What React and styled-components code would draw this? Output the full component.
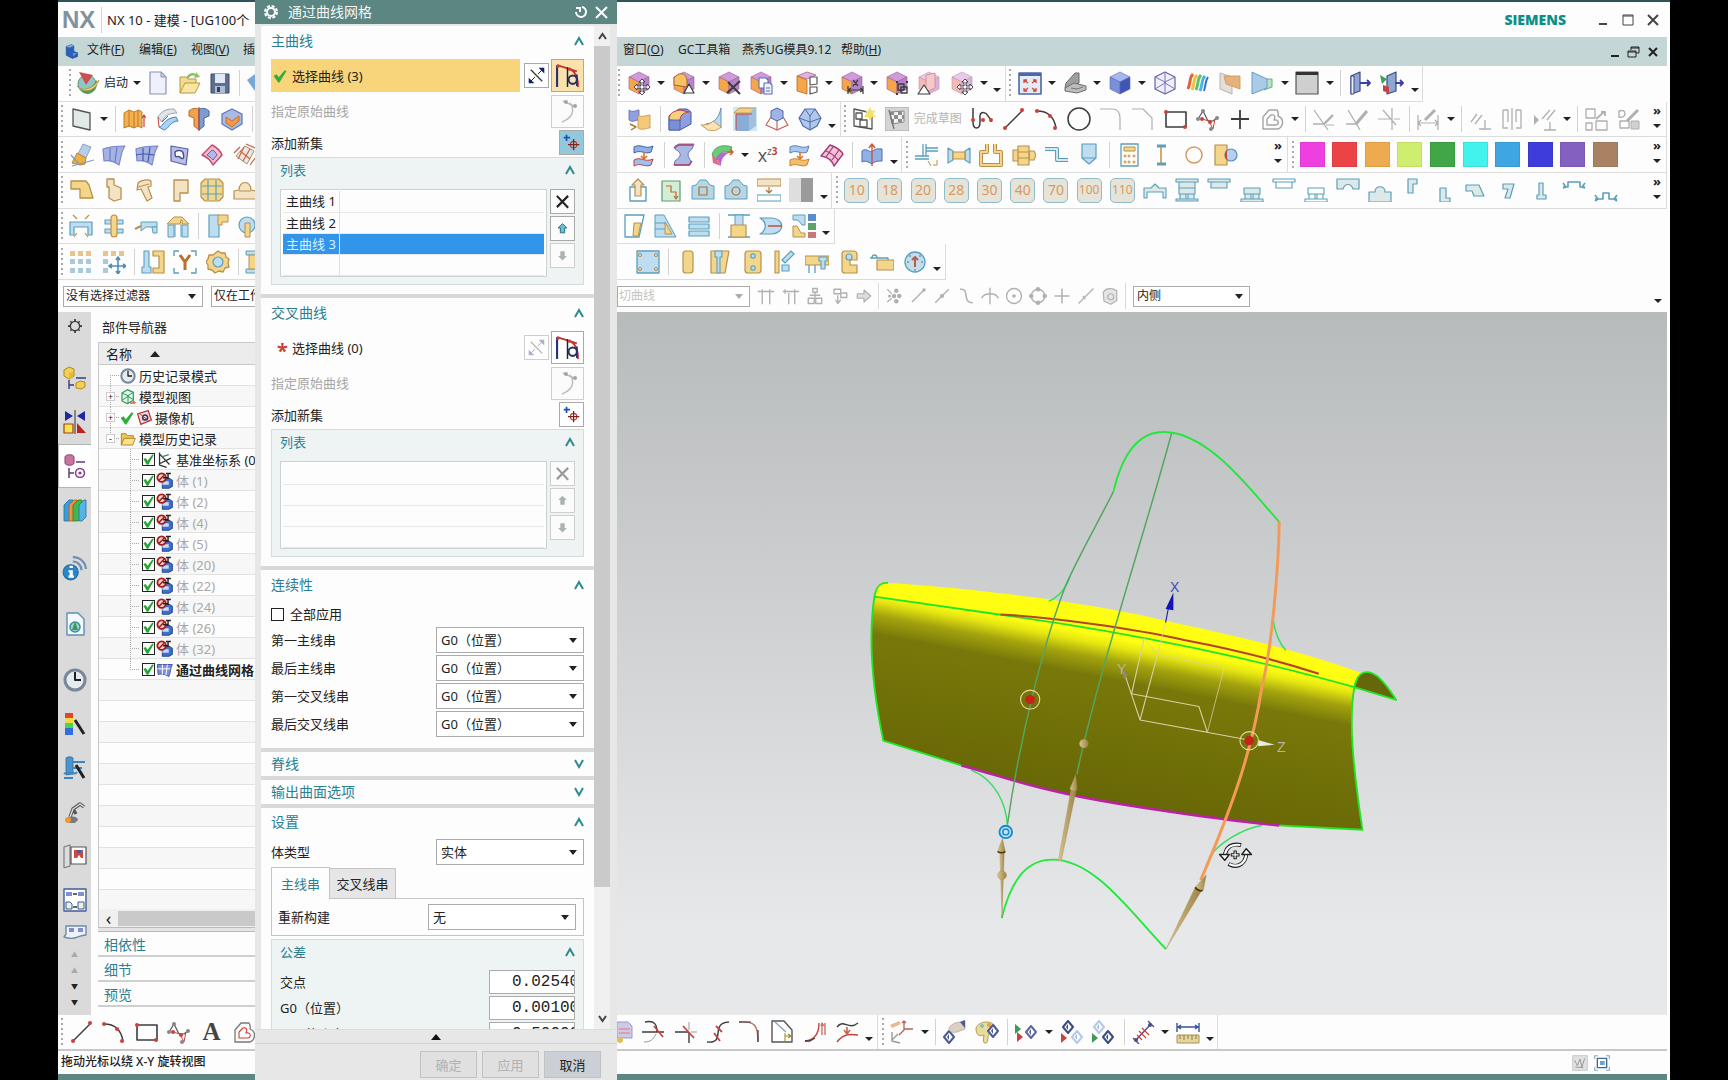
import React, { useState } from "react";
import styled, { createGlobalStyle, css } from "styled-components";

const GlobalStyle = createGlobalStyle`
  * {
    box-sizing: border-box;
  }
  body {
    margin: 0;
    background: #000;
    color: #222;
    font: 13px/16px "Noto Sans", "Noto Sans CJK SC", sans-serif;
  }
  button, input, select {
    font: inherit;
    color: inherit;
    margin: 0;
    padding: 0;
  }
`;

/* ---------- icon drawings: [path, fill, stroke, stroke width] ---------- */
const TAN = "#f4d68a";
const TANL = "#b8904c";
const CREAM = "#f3e2c4";
const BLUE = "#bfddf0";
const BLUEL = "#5a9fbd";
const RED = "#c8433c";
const GREY = "#b0b0b0";
const DARK = "#3c3c3c";
const VIO = "#7d86c9";
const PALE = "#dde9e6";

const line = (d, stroke = DARK, w = 1.4) => [d, "none", stroke, w];
const dot = (x, y, r = 2, fill = RED) => [
  `M${x - r} ${y}a${r} ${r} 0 1 0 ${2 * r} 0a${r} ${r} 0 1 0 ${-2 * r} 0z`,
  fill,
];
const ring = (x, y, r, stroke, w = 1.4, fill = "none") => [
  `M${x - r} ${y}a${r} ${r} 0 1 0 ${2 * r} 0a${r} ${r} 0 1 0 ${-2 * r} 0z`,
  fill,
  stroke,
  w,
];
const cube = (top, left, right, edge) => [
  ["M2 6 12 1l10 5-10 5z", top, edge, 0.6],
  ["M2 6l10 5v12L2 18z", left, edge, 0.6],
  ["M22 6l-10 5v12l10-5z", right, edge, 0.6],
];
const syncCube = cube("#cf9bdc", "#f5a54a", "#b583cc", "#9a5c8c");
const paleCube = cube("#e6cbea", "#f3b9b4", "#d9b3dc", "#c28fb4");
const blueCube = cube("#a9b8ea", "#7b8fd8", "#3f56b4", "#5a6cc0");
const gem = (x, y, c, e) => [
  [`M${x} ${y - 6}l5 6-5 6-5-6z`, "#fff", e, 2],
  [`M${x} ${y - 3}v6l-2-3z`, c],
];
const moveArrows = [
  ["M15 8l3 3h-2v4h4v-2l3 3-3 3v-2h-4v4h2l-3 3-3-3h2v-4h-4v2l-3-3 3-3v2h4v-4h-2z", "#fff", DARK, 0.9],
];

const icons = {
  launch: [
    ring(11, 13, 9, "#5b9a6a", 1, "#8fc7c9"),
    ["M4 17c5 3 12 0 17-8 1 8-3 13-9 14-4 0-7-3-8-6z", "#4f9a62"],
    ["M1 15c6 6 15 3 22-6-3 10-14 15-22 6z", "#f0d36a", "#b9912f", 0.7],
    ["M3 1l14 3-7 10z", "#cc4f50"],
  ],
  newDoc: [["M4 1h11l5 5v17H4z", "#eef0fb", "#8d92b8", 1.2], ["M15 1v5h5z", "#c6cae6", "#8d92b8", 1]],
  open: [
    ["M3 22V6h6l2 2h8v4", "#f3dc8d", "#b79a43", 1],
    ["M3 22l5-10h15l-5 10z", "#f7e6a4", "#b79a43", 1],
    ["M9 7c2-5 7-6 10-4V1l4 5-6 1 1-2c-3-1-5 0-6 2z", "#8cc45b"],
  ],
  save: [["M3 3h18v19H3z", "#5c6e92", "#3b4a6b", 1], ["M7 3h10v9H7z", "#e3e9f4"], ["M7 15h10v7H7z", "#aebbd4"], ["M9 16h3v5H9z", "#33415f"]],
  undoCut: [["M2 9l8-6v4h12v9H10v4z", "#79a7d9"]],
  plane: [["M3 2l17 4v17L3 19z", "#e2e9e6", "#555", 1.3]],
  extrude: [["M2 6l5-3 5 2 5-2 3 2v16l-4-2-4 2-5-2-5 2z", "#f4b04f", "#c07a26", 1], line("M7 3v17M12 5v16M16 3v16", "#c07a26", 1), line("M22 20V9M20 11l2-3 2 3", RED, 1.2)],
  sweep: [["M3 10C8 2 14 2 19 2l3 4C14 6 9 9 7 15z", "#dfe6ea", "#9aa6ae", 1], ["M4 20c4 0 5-9 17-10l2 4c-8 0-10 9-14 9z", "#a9d2f3", "#4f7fb5", 1], line("M3 10l1 10M7 15l6-6", RED, 1)],
  revolve: [["M2 4c3-3 7-3 10-2v21l-5-4V11L2 9z", "#f2a24a", "#b56b20", 1], ["M22 4c-3-3-7-3-10-2v21l5-4V11l5-2z", "#7d9cd0", "#42639c", 1], line("M12 0v24", RED, 1)],
  shellBox: [["M12 2l10 5v10l-10 6L2 17V7z", "#a8bbe4", "#5b74b5", 1.2], ["M6 10l6 4 7-5v5l-7 6-6-4z", "#f29a48", "#cf6c22", 1]],
  brush: [["M13 1l8 3-5 11-8-4z", "#b6cfe8", "#7797b9", 0.8], ["M7 10l9 5-1 6-5 1-8-2z", "#eeb040", "#c1842a", 1], line("M1 12l8 9M2 23l22-6", "#7c9bc4", 1.2)],
  ruled: [["M1 6c7-3 14-3 22-3-4 5-4 12-6 19-6-4-10-5-15-4z", "#a4b2e4", VIO, 1.2], line("M8 5v13M15 4l-2 15", "#6370b8", 1)],
  mesh: [["M1 6c7-3 14-3 22-3-4 5-4 12-6 19-6-4-10-5-15-4z", "#a4b2e4", VIO, 1.2], line("M8 5v13M15 4l-2 15M1 12c7-2 12-1 18 0", "#4d5aa8", 1.2)],
  nSided: [["M4 3l17 3-2 16-15-4z", "#b9bfe8", "#565ea6", 1.2], ["M8 9c3-3 8-1 8 1 2 6-1 7-3 4-3-2-5 3-5-5z", "#fff", "#444b8a", 1.4]],
  patch: [["M2 12L12 2c4 2 8 5 10 10l-9 10c-2-4-6-8-11-10z", "#f5bccb", "#c2476c", 1.4], ["M7 12l5-5c3 1 4 3 5 5l-4 5c-2-2-4-4-6-5z", "#b5b9e8", "#5a61ae", 1]],
  gridWarp: [["M4 13L13 3l9 5-7 13z", "#ece7e3", "#a08e83", 1], line("M8 8l10 8M12 4l-6 12M18 6l-7 12M2 10l6-6M18 22l6-8M14 1l9 4", "#c9653e", 1.2)],
  blockA: [["M1 3h15l3 4 4 13H10v-9H1z", TAN, TANL, 1.3]],
  blockB: [["M5 1h7v6l7 3v11l-7 2-5-3V9H5z", CREAM, TANL, 1.3]],
  screw: [["M3 5c3-3 10-4 13-2v5l-3 1 4 11-5 3-6-12-4 1z", CREAM, TANL, 1.2], line("M3 9l11-3", TANL, 1)],
  blockC: [["M6 2h14v13h-8v8H6z", CREAM, TANL, 1.3]],
  netTan: [["M5 1h14l4 4v14l-4 4H5l-4-4V5z", TAN, TANL, 1.2], line("M8 2v20M16 2v20M2 8h20M2 16h20", BLUEL, 1.2)],
  bell: [["M1 21v-8l5-1c0-10 12-10 12 0l5 1v8z", CREAM, TANL, 1.2], line("M6 13h12", TANL, 1)],
  spanIn: [["M1 8h22v13h-4v-8H5v8H1z", BLUE, BLUEL, 1.2], line("M4 1l4 4M20 1l-4 4M5 23l3-4M19 23l-3-4", TANL, 1.2)],
  crossPill: [["M3 6h18v4H3zM3 15h18v4H3z", BLUE, BLUEL, 1.1], ["M9 4a3 3 0 0 1 6 0v16a3 3 0 0 1-6 0z", TAN, TANL, 1.2]],
  hammer: [["M7 8h16v5H12l-5 4z", BLUE, BLUEL, 1], ["M18 13h5v6h-4z", BLUE, BLUEL, 1], line("M1 15l6-3", TANL, 2)],
  archTan: [["M2 11h6v12H2zM16 11h6v12h-6z", BLUE, BLUEL, 1], ["M1 10l7-7h8l7 7h-7V6h-1l-1 4h-5z", TAN, TANL, 1], line("M9 23V10M15 23V10", BLUEL, 1)],
  cornerTan: [["M3 1h10v22H3z", BLUE, BLUEL, 1.2], ["M12 1h10v7h-6v3h-4z", TAN, TANL, 1]],
  roundBar: [ring(9, 11, 8, BLUEL, 1.2, BLUE), ["M7 9h5v14H7z", TAN, TANL, 1]],
  dots: [["M1 1h5v5H1zM9 1h5v5H9zM17 1h5v5h-5z", "#eac28c"], ["M1 9h5v5H1zM9 9h5v5H9zM17 9h5v5h-5zM1 18h5v5H1zM9 18h5v5H9zM17 18h5v5h-5z", "#aac9dc"]],
  dotsMove: [["M1 1h5v5H1zM9 1h5v5H9zM17 1h5v5h-5z", "#eac28c"], ["M1 9h5v5H1zM1 18h5v5H1z", "#aac9dc"], line("M16 8v15M8 16h15M14 10l2-3 2 3M14 21l2 3 2-3M10 14l-3 2 3 2M21 14l3 2-3 2", "#4f8fba", 1.6)],
  bracket: [["M3 1h5v16h2v6H1v-6h2z", BLUE, BLUEL, 1.1], ["M12 1h11v22H12v-5h6V6h-6z", TAN, TANL, 1.2]],
  yFrame: [line("M1 6V1h5M18 1h5v5M1 18v5h5M18 23h5v-5", BLUEL, 1.4), line("M7 5l5 7v8M17 5l-5 7", "#b5702d", 3)],
  gearTan: [["M12 1l3 2 4 0 1 4 3 2-1 4 1 4-4 1-2 4-4-1-4 2-3-3-4-1 0-4-2-3 2-3 1-4 4 0z", TAN, TANL, 1.3], ring(12, 12, 5, BLUEL, 1.2, BLUE)],
  beam: [["M1 1h14v4H1zM1 19h14v4H1z", BLUE, BLUEL, 1], ["M4 5h8v14H4z", TAN, TANL, 1]],

  cubeMove: [...syncCube, ...moveArrows],
  cubeFace: [...syncCube, ["M2 7c4-6 12-6 13 2v7L2 14z", "#f7c263", "#a8622a", 1], ["M17 13l5 9H12z", "#fff", DARK, 1.2]],
  cubeDelete: [...syncCube, line("M11 11l12 12M23 10L10 22", DARK, 2)],
  cubeCopy: [...syncCube, ["M10 7h7l2 2v8h-9z", "#fff", "#5b6db5", 1.1], ["M15 12h6l2 2v9h-8z", "#eef2ff", "#5b6db5", 1.1], line("M17 17h4M17 20h4", "#5b6db5", 1)],
  cubePattern: [["M2 5l10-4 9 3-9 4z", "#e5b0dc", "#a8628c", 0.8], ["M2 5l10 4v14L2 20z", "#f5a54a", "#b56b20", 0.8], ["M15 6h7v7l-7 1zM15 16h7v5l-7 2z", "#fff", "#555", 1.2]],
  cubeDim: [...syncCube, line("M8 15v8M23 15v8M8 19h15M11 17l-3 2 3 2M20 17l3 2-3 2M13 9l5 6M18 9l-5 6", DARK, 1.2)],
  cubeGroup: [...syncCube, ["M13 13h6v6h-6z", "none", DARK, 1.4], ["M16 16h6v6h-6z", "none", DARK, 1.4], line("M11 11h2M21 11h2M11 23h2", DARK, 2)],
  cubePairTri: [...paleCube, ["M9 4l9-2v15l-9 4z", "#f5c9c9", "#c78490", 0.8], ["M7 14l6 9H1z", "#fff", DARK, 1.1]],
  cubePaleMove: [...paleCube, ...moveArrows],
  fitView: [["M1 2h22v21H1z", "#e4eaf6", "#4f67a4", 1.6], ["M1 2h22v3H1z", "#4f67a4"], line("M6 9l4 3M18 9l-4 3M6 20l4-3M18 20l-4-3M6 12V9h3M18 12V9h-3M6 17v3h3M18 17v3h-3", "#cd4a32", 1.3)],
  hinge: [["M3 12L12 2h4v10l-5 4-9 1z", "#9e9e9e", "#6d6d6d", 1], ["M2 17l9-5 12 3v4l-9 3-12-2z", "#bdbdbd", "#6d6d6d", 1], line("M8 17l6 1 6-2", "#777", 1)],
  solidCube: blueCube,
  wireCube: [["M2 6l10-5 10 5v12l-10 5-10-5z", "#efeffa", "#6660a8", 1.2], line("M2 6l10 5 10-5M12 11v12M12 1v11M2 18l10-6 10 6", "#7a74b6", 1)],
  rainbow: [line("M3 18c3-7 1-11 5-15", "#e1623c", 3), line("M7 19c3-7 1-11 5-15", "#f0c33c", 3), line("M11 19c3-7 1-11 5-15", "#61c06a", 3), line("M15 20c3-7 1-11 5-15", "#41b9e0", 3), line("M19 20c2-6 1-10 4-14", "#3d6bd0", 2)],
  clipPlane: [["M2 2l12 4v17L2 18z", "#e3e0dc", "#b9b4ae", 1], ["M6 5h16v13l-14-5z", "#e5b27c", "#cc9257", 0.8]],
  clipBlue: [["M12 8h10v8l-8 3z", "#b6e4c0", "#69ae7d", 1], ["M2 1l15 7v9L2 23z", "#aacbe6", "#6f9ac2", 1]],
  shade: [["M1 1h22v22H1z", "#cfcfcf", "#555", 1.2], ["M1 1h22v3H1z", "#333"]],
  doorOut: [["M3 5l9-4v19l-9 3z", "#8fa6d2", "#3a4b86", 1.2], ["M3 5h3v18H3z", "#e7ecf8", "#3a4b86", 1], line("M12 12h10M19 9l3 3-3 3", "#3b3fa8", 1.8)],
  doorMark: [["M7 5l9-4v19l-9 3z", "#8fa6d2", "#3a4b86", 1.2], line("M15 12h8M20 9l3 3-3 3", "#3b3fa8", 1.8), ["M0 4l7 4-5 5z", "#3ea05a"], ["M3 20v-6l6 2v6z", RED]],

  bend: [["M1 3c4 3 7 0 10 0v10c-4 0-6 3-10 0z", "#8f9fdf", "#5b69b3", 0.8], ["M10 8c4 3 8 0 12 0v13c-5 0-7 3-12 0z", "#f5c87c", "#c3924a", 0.8], line("M2 17l6 3-5 3", "#b7722a", 1.4)],
  edgeBlend: [["M1 9l10-7h8l4 3v12l-11 6H1z", "#8d9fe0", "#4658a8", 1], ["M1 13c0-8 6-9 11-10l9 2c-7 1-9 4-9 9z", "#f6d07c", "#b5423a", 1], ["M1 13h11v10H1z", "#7c8ed6", "#4658a8", 0.8]],
  sheetUp: [["M21 1v20l-7-4H6c9-1 13-7 15-16z", "#bcd9f1", "#6c8fb5", 1], ["M1 18c6 0 9-1 12-4l8 6c-4 4-9 4-13 3z", "#fbe2b4", "#c69a55", 1]],
  chamfer: [["M0 0h24v24H0z", "#cfe9f1"], ["M1 6l5-5h17l-4 5z", "#f2cf85", "#b08a4a", 0.8], ["M3 7h13v17H3z", "#88add6"], ["M16 7l5-6h2v18l-7 5z", "#a3bfe0"], line("M3 7v16M3 7h16", RED, 1)],
  offsetCube: [["M12 1l6 3v7l-6 3-6-3V4z", "#9fb4e6", "#4e64a8", 1], line("M6 10L1 18l11 5 11-5-5-8M12 14v9", "#c05a52", 1.1)],
  ball: [["M7 2h10l6 9-4 8-7 4-7-4-4-8z", "#b1c8ea", "#4e6db2", 1.2], line("M7 2l5 7 5-7M12 9v14M1 11l11 4 11-4", "#4e6db2", 1)],
  sketchNew: [["M2 2l18 4v16L2 19z", "#fff", "#555", 1.3], line("M4 6h6v6H4zM8 13h7v7H8z", "#555", 1.3), ["M18 0l2 4 4-1-3 4 3 3-4 0-2 4-2-4-4 0 3-4-2-3 3 1z", "#f2e26c"]],
  flag: [["M0 0h24v24H0z", "#d4d4d4", "#a9a9a9", 1], ["M5 5l14-1v11L7 17z", "#f3f3f3", "#888", 1], ["M5 5h4v3H5zM13 4h4v4h-4zM9 8h4v4H9zM17 8h2v4h-2zM6 12h3v4H6zM13 12h4v3h-4z", "#8d8d8d"], line("M4 3l5 19", "#777", 1.4)],
  profile: [line("M3 1v14c0 8 7 8 7 0V9c0-5 6-4 8 0 3 3 3 4 3 6", DARK, 1.5), dot(3, 13), dot(13, 13), dot(21, 13)],
  line: [line("M3 21L21 3"), dot(3, 21), dot(20, 3)],
  arc: [line("M2 4c10 0 17 5 19 17"), dot(2, 4), dot(15, 9), dot(20, 21)],
  circle: [ring(12, 12, 11, DARK, 1.5)],
  fillet: [line("M1 2h12c6 0 8 3 8 9v12", GREY, 1.2)],
  chamferLine: [line("M1 2h11l9 9v12", GREY, 1.2)],
  rect: [["M2 5h20v15H2z", "none", DARK, 1.6], dot(2, 5), dot(21, 20)],
  spline: [line("M2 12l5-8 5 10 5 0 5-4", "#555", 1.2), line("M6 12l7 2 4 8 2-10", RED, 1), dot(2, 12, 2, "#888"), dot(7, 4, 2, "#888"), dot(6, 12), dot(14, 15), dot(21, 11, 2, "#888"), dot(15, 22, 2, "#888")],
  plus: [line("M12 3v19M3 12h18", DARK, 1.8)],
  offsetCurve: [line("M3 22V10l6-7h8c2 3 1 5 1 6 7 3 5 11 0 13z", "#a5a5a5", 1.4), line("M7 18v-6l4-4c5-1 4 3 3 5 6-1 5 5 1 5z", "#a5a5a5", 1.4)],
  offsetRed: [line("M3 22V10l6-7h8c2 3 1 5 1 6 7 3 5 11 0 13z", "#777", 1.3), line("M7 18v-6l4-4c5-1 4 3 3 5 6-1 5 5 1 5z", RED, 1.1)],
  trimA: [line("M2 3l14 20M1 17h12", GREY, 1.3), line("M12 17l9-9", GREY, 2.4), line("M14 18h8", GREY, 1)],
  trimB: [line("M3 3l12 20M1 17h10", GREY, 1.3), line("M11 17L22 4", GREY, 3)],
  trimC: [line("M1 12h14M15 1v22M6 3l13 15", GREY, 1.2), line("M17 12h6", GREY, 1)],
  dimGrey: [line("M2 8v15M22 8v15M2 16h20M5 13l-3 3 3 3M19 13l3 3-3 3", GREY, 1.2), line("M9 13L19 3", GREY, 3)],
  perp: [line("M3 15L9 7M7 17l7-9M11 22h12M17 13v9", GREY, 1.3)],
  mirrorGrey: [line("M3 3v18h5M21 3v18h-5M12 1v22M8 3v12M16 3v12M3 3h5M16 3h5", GREY, 1.3)],
  triPerp: [["M1 8l5 5-5 5z", GREY], line("M9 12l8-9M14 13l8-10M11 23h12M17 15v8", GREY, 1.3)],
  refA: [["M2 2h9v9H2zM2 16h6v7H2zM12 14h11v9H12z", "none", GREY, 1.3], line("M12 12l8-7M17 5h4v4", GREY, 1.8)],
  refB: [["M2 4c8-3 8 8 0 6zM3 14h9v7H3z", "none", GREY, 1.4], line("M10 14L21 3", GREY, 3), ["M14 14h8v8h-8z", "#d0d0d0", GREY, 1]],

  warpPair: [["M2 4c7-4 11 3 19-1l-2 6c-6 3-10-3-17 1z", "#8cb0e8", "#3f62a8", 1], ["M2 17c7-4 11 3 19-1l-2 6c-6 3-10-3-17 1z", "#9fc0ee", "#b8423a", 1], line("M12 9v7M9 13l3 3 3-3", "#d9762b", 1.6)],
  bridge: [["M3 3l4-2h15l-2 5c-6 4-4 8-1 12l-1 4H2l1-4c7-5 7-8 0-12z", "#a8b9e4", "#6a76b8", 1], line("M2 5l5-3h14M2 22h15l3-4", "#b53c64", 1.4)],
  offsetSrf: [["M1 12C3 3 12 1 21 4l-2 6c-6-3-12 0-13 7z", "#6fcb7a", "#3f9a58", 0.8], ["M5 15c3-5 8-7 13-5-5 2-8 6-8 13z", "#b866d0"], ["M1 12l5 5 4 6-8-3z", "#e56a7c"], line("M16 9h6M19 6l3 3-3 3", "#c4692a", 1.6)],
  warpTan: [["M2 4c7-4 11 3 19-1l-2 6c-6 3-10-3-17 1z", "#a9c8f0", "#5b7db8", 1], ["M2 17c7-4 11 3 19-1l-2 6c-6 3-10-3-17 1z", "#f3bf6c", "#c8842f", 1], line("M12 9v7M9 13l3 3 3-3", "#d9762b", 1.6)],
  netPink: [["M1 13L10 2c6 2 10 4 13 9l-9 12C12 17 8 14 1 13z", "#f4c3d8", "#a63a78", 1.4], line("M6 8c5 2 9 5 12 9M13 4l-7 10M19 7l-7 10", "#a63a78", 1.2)],
  flow: [["M2 8c5-4 8 3 11 0s6-2 9-2v12c-4 0-6 0-9 2s-6-4-11-1z", "#8fb1e6", "#4a6db0", 1], line("M12 23V2M9 5l3-4 3 4", "#c9553f", 1.4)],
  tee: [line("M1 13h14M1 16h14M9 1v12M12 1v12M12 5h12M12 8h12", BLUEL, 1.3), line("M14 18l3 5M23 17v5h-4", TANL, 1)],
  dumbbell: [["M1 5l5 3v9l-5 3zM23 5l-5 3v9l5 3z", BLUE, BLUEL, 1.2], ["M6 9h12v7H6z", TAN, TANL, 1.2]],
  pot: [line("M8 1v8H2v13h20V9h-6V1", TANL, 4), line("M8 1v8H2v13h20V9h-6V1", TAN, 2)],
  nuts: [["M1 7h6v11H1zM17 8h5l2 4-2 5h-5z", TAN, TANL, 1.1], ["M6 3h11v19H6z", TAN, TANL, 1.2], line("M6 9h11M6 15h11", TANL, 1)],
  zPipe: [line("M1 6h12v11h11", BLUEL, 4), line("M1 6h12v11h11", "#fff", 1.4)],
  pencilTip: [["M5 1h14v14l-7 6-7-6z", BLUE, BLUEL, 1.2], line("M5 15h14", BLUEL, 1)],
  calc: [["M4 1h17v22H4z", "#fffaf0", BLUEL, 1.3], ["M7 4h11v4H7z", TAN, TANL, 1], ring(8, 13, 1, TANL, 1), ring(12, 13, 1, TANL, 1), ring(17, 13, 1, TANL, 1), ring(8, 19, 1, TANL, 1), ring(12, 19, 1, TANL, 1), ring(17, 19, 1, TANL, 1)],
  iBeam: [line("M8 3h9M8 21h9", BLUEL, 3), line("M12 4v16", "#c98c3a", 1.5)],
  orangeRing: [ring(12, 12, 8, "#d49a62", 1.5)],
  plateBall: [["M1 2h12v20H1z", TAN, TANL, 1.2], ring(17, 12, 6, "#5a8fc0", 1.2, "#b5d0ee"), ["M13 7c-3 3-3 7 0 10z", RED]],

  boxUp: [["M4 9h16v14H4z", "#fff", BLUEL, 1.4], ["M9 18V7H6l6-6 6 6h-3v11z", CREAM, TANL, 1.2]],
  boxPath: [["M3 3h18v20H3z", "#d5ecd6", "#5aa074", 1.2], line("M7 8h5v6h5v6M15 18l2 3 2-3", "#b5702d", 1.2)],
  camSq: [["M1 8l4-1 4-5h6l4 5 4 1v13H1z", "#b5d6e6", BLUEL, 1], ["M8 9h8v8H8z", "none", "#b5702d", 1.2]],
  camRd: [["M1 8l4-1 4-5h6l4 5 4 1v13H1z", "#b5d6e6", BLUEL, 1], ring(12, 13, 4, "#b5702d", 1.2)],
  press: [["M0 1h24v7H0z", CREAM, TANL, 1.1], ["M0 17h24v6H0z", "#fff", BLUEL, 1.2], line("M12 9v6M9 12l3 3 3-3", "#b5702d", 1.1)],
  halfGrey: [["M0 0h12v24H0z", "#dedede"], ["M12 0h12v24H12z", "#9b9b9b"]],

  roofA: [["M1 20v-10h7l4-4 4 4h7v10h-3v-6H4v6z", PALE, BLUEL, 1.1]],
  stackA: [["M1 1h22v3H1zM4 4h16v12H4zM5 16h6v5H5zM13 16h6v5h-6zM1 21h22v2H1z", PALE, BLUEL, 1.1], line("M4 10h16", BLUEL, 1)],
  stackB: [["M1 1h22v3H1zM4 4h16v6H4z", PALE, BLUEL, 1.1]],
  stackC: [["M4 10h16v6H4zM5 16h6v5H5zM13 16h6v5h-6zM1 21h22v3H1z", PALE, BLUEL, 1.1]],
  stackD: [["M1 1h22v3H1zM4 4h16v6H4z", "#fff", BLUEL, 1.1]],
  stackE: [["M4 10h16v6H4zM5 16h6v5H5zM13 16h6v5h-6zM1 21h22v3H1z", "#fff", BLUEL, 1.1]],
  archA: [["M1 1h22v10h-6c-2-6-8-6-10 0H1z", PALE, BLUEL, 1.2]],
  archB: [["M1 24V14h6c0-7 10-7 10 0h6v10z", PALE, BLUEL, 1.2]],
  footA: [["M7 1h9v5h-4v9H7z", PALE, BLUEL, 1.2]],
  footB: [["M7 10h6v10h4v4H7z", PALE, BLUEL, 1.2]],
  skew: [["M1 7h13l5 11H9l-2-5H1z", PALE, BLUEL, 1.2]],
  seven: [["M6 6h11l-4 14H8l3-9H6z", PALE, BLUEL, 1.2]],
  post: [["M10 5h4v12h3v4H8v-4h2z", PALE, BLUEL, 1.2]],
  omegaA: [line("M1 9h5V4h12v5h5M1 5l3 4-3 1M23 5l-3 4 3 1", BLUEL, 1.6)],
  omegaB: [line("M1 21h8v-6h6v6h8M1 17l3 4-3 2M23 17l-3 4 3 2", BLUEL, 1.6)],

  wedgeA: [["M3 1h19l-5 22H3z", "#fff", BLUEL, 1.3], ["M12 9h7l-3 13h-5z", TAN, TANL, 1]],
  wedgeB: [["M1 1h9l12 22H1z", BLUE, BLUEL, 1], ["M11 8l7 12h-7z", TAN, TANL, 1], line("M1 9h10M1 15h10", BLUEL, 1)],
  bars: [["M2 3h20v5H2zM2 10h20v5H2zM2 17h20v5H2z", BLUE, BLUEL, 1.2]],
  pillar: [line("M1 1h22M1 23h22", BLUEL, 1.4), ["M8 1h8v11H8z", BLUE, BLUEL, 1], ["M4 11h15v12H4z", TAN, TANL, 1.2]],
  dTube: [["M1 4h12c13 1 13 15 0 16H1c7-4 7-12 0-16z", BLUE, BLUEL, 1.2], line("M9 12h14", RED, 1.4)],
  steps: [["M1 1h12v10h-3l-4-5H1z", BLUE, BLUEL, 1], ["M1 12h4l4 7h4v4H1z", TAN, TANL, 1], ["M16 0h8v7h-8z", "#5a8ecb"], ["M16 9h8v7h-8z", "#5aa468"], ["M16 18h8v6h-8z", "#c97878"]],

  plateHoles: [["M1 1h22v22H1z", BLUE, BLUEL, 1.3], ring(4, 5, 1.6, TANL, 1), ring(20, 5, 1.6, TANL, 1), ring(4, 19, 1.6, TANL, 1), ring(20, 19, 1.6, TANL, 1)],
  pill: [["M7 4q0-3 3-3h4q3 0 3 3v16q0 3-3 3h-4q-3 0-3-3z", TAN, TANL, 1.2]],
  bolt: [["M3 1h18l-4 22H3z", TAN, TANL, 1.2], ["M7 1h7v6h-2v16H9V7H7z", BLUE, BLUEL, 1.1]],
  plate2: [["M4 4q0-3 3-3h10q3 0 3 3v16q0 3-3 3H7q-3 0-3-3z", TAN, TANL, 1.2], ring(12, 6, 2.2, BLUEL, 1.2, BLUE), ring(12, 18, 2.2, BLUEL, 1.2, BLUE)],
  angle: [["M2 1h4v22H2z", TAN, TANL, 1.1], ["M9 10L18 1l3 3-9 9zM9 15h7v6H9z", BLUE, BLUEL, 1.1]],
  table: [["M0 6h24v9H0z", TAN, TANL, 1.2], line("M4 15v8M10 15v8", BLUEL, 1.3), ["M14 7h8v4h-2v8h-4v-8h-2z", BLUE, BLUEL, 1.1]],
  sShape: [["M4 4q0-3 3-3h8q4 0 4 3v6h-7v5h7v8H7q-3 0-3-3z", TAN, TANL, 1.2], ring(11, 7, 3, BLUEL, 1.2, BLUE)],
  float: [["M7 10h17v10H7z", TAN, TANL, 1.2], line("M0 8h18v2M2 8c0-4 5-4 5 0", BLUEL, 1.3)],
  dial: [ring(12, 12, 10, BLUEL, 1.3, "#c5dceb"), line("M12 17V8M9 10l3-3 3 3", "#b5614a", 2), dot(5, 12, 1, BLUEL), dot(19, 12, 1, BLUEL), dot(12, 20, 1, BLUEL), dot(7, 6, 1, BLUEL), dot(17, 6, 1, BLUEL)],

  sTie: [line("M7 3v20M17 3v20M1 6h22", GREY, 1.8)],
  sTie2: [line("M9 8v15M17 3v20M1 6h22M4 3v6", GREY, 1.8)],
  sTree: [["M9 2h6v5H9zM3 15h8v7H3zM13 15h8v7h-8z", "none", GREY, 1.8], line("M12 7v8M5 11h14", GREY, 1.8)],
  sFilter: [["M4 3h9v6H4zM13 8h8v6h-8z", "none", GREY, 1.8], line("M9 11v10M6 17l3 5 4-5", GREY, 1.8)],
  sArrow: [["M3 9h9V4l9 8-9 8v-5H3z", "#ddd", GREY, 1.6]],
  sSnap: [line("M3 3l6 6M3 20l6-5", GREY, 1.6), dot(12, 12, 3, GREY), dot(19, 12, 3, GREY), dot(15, 5, 3, GREY), dot(15, 19, 3, GREY), dot(6, 12, 2, GREY)],
  sEnd: [line("M4 20L19 5", GREY, 1.8), dot(20, 4, 2.4, GREY)],
  sMid: [line("M3 21L21 3", GREY, 1.8), dot(12, 12, 2.8, GREY)],
  sCtrl: [line("M4 3c14-2 2 19 17 18", GREY, 2)],
  sInter: [line("M12 1v22M1 15c3-8 19-8 22 0", GREY, 1.8)],
  sCenter: [ring(12, 12, 10, GREY, 1.8), dot(12, 12, 2.4, GREY)],
  sQuad: [ring(12, 12, 9, GREY, 1.8), dot(12, 3, 3, GREY), dot(12, 21, 3, GREY), dot(3, 12, 3, GREY), dot(21, 12, 3, GREY)],
  sPlus: [line("M12 2v20M2 12h20", GREY, 2)],
  sOn: [line("M2 22L22 2M8 12l3 4", GREY, 1.8)],
  sFace: [["M3 7c4-6 12-6 18-2v13l-8 5-9-4z", "#e5e5e5", GREY, 1.6], ring(13, 13, 4, GREY, 1.6)],

  sheet: [["M8 2h11l4 4v12H8z", "#c9cbea", "#9a9ac8", 1], ["M10 8h11v2H10zM10 12h11v2H10z", "#e59aa4"], dot(11, 20, 3, "#e2bf58")],
  curveCut: [line("M4 2c10-2 12 3 12 10M1 12h22", DARK, 1.4), line("M13 6l9 11", RED, 1.8), line("M3 22c6 0 9-2 12-8", "#999", 1)],
  crossCut: [line("M1 12h14M15 12v11", DARK, 1.4), line("M9 6l11 12", RED, 1.8), line("M15 2v8M17 12h6", "#999", 1)],
  sCut: [line("M1 22c20 2 2-19 22-20", DARK, 1.4), line("M10 6l6 6M8 13l6 8", RED, 1.8)],
  corner: [line("M1 2c16-1 19 3 19 20", "#b86b68", 1.4), line("M1 2h12M20 10v12", DARK, 1.2)],
  chamferBox: [["M2 1h12l8 9v12H2z", "#fff", "#555", 1.4], line("M5 2l11 10", "#8a9ac0", 1.2), line("M15 13v8M15 16h5M18 14l3 2-3 2", "#a88a2c", 1.1)],
  curveUp: [line("M2 21c9-1 14-6 14-18", RED, 1.4), line("M2 21h5l5-3", DARK, 1.3), line("M19 15V3M22 3v12M18 6l1-3 2 3", "#c06a62", 1.3)],
  project: [line("M2 7c7-9 11 4 21-4", DARK, 1.4), line("M2 22c7-9 14-8 21-7", RED, 1.4), line("M12 7v6M9 10l3 4 3-4", "#c06a4a", 1.6)],
  csysMove: [["M0 5l9-4 2 3-9 4z", "#eabb8c"], line("M14 2v8l-5 5M14 9h9M12 3l2-2 2 2", "#b5605a", 1.3), line("M2 12v9l8 2M2 20l6-6", "#999", 1.4)],
  gemHand: [...gem(7, 17, "#4b5c92", "#4b5c92"), ["M7 8c2-4 8-6 12-6l4-1v8l-8 3c-4 1-8 0-8-4z", "#dfcfc0", "#b9a795", 0.8], ["M18 2l5-2v8z", "#4b5c92"]],
  palette: [["M1 8c3-8 18-8 20 0 1 5-5 3-7 6s0 8-3 9-3-3-2-8c-5 2-8 0-8-7z", "#e9dc9a", "#b0a052", 1], dot(7, 6, 2, "#7fc3b7"), dot(14, 5, 2, "#e0a14a"), ...gem(18, 11, "#4b5c92", "#4b5c92")],
  gemTri: [["M1 4l6 5-6 5z", "#3f9a56"], ["M3 12l6 5-6 5z", RED], ...gem(17, 12, "#4b5c92", "#5b6a9c")],
  gemPairA: [...gem(9, 7, "#3a4b82", "#3a4b82"), ...gem(18, 17, "#9fb6dc", "#b5c9e8"), ["M2 13l6 5-6 5z", RED]],
  gemPairB: [...gem(8, 7, "#9fb6dc", "#b5c9e8"), ...gem(17, 17, "#3a4b82", "#3a4b82"), ["M1 13l6 5-6 5z", "#3f9a56"]],
  dimDiag: [line("M4 21L20 4M2 18l6 6M17 1l6 6", "#4b4f86", 1.4), line("M8 11l7 7M11 8l7 7M6 15l5 5", RED, 1.2), dot(5, 20, 2, "#4b4f86"), dot(19, 5, 2, "#4b4f86")],
  ruler: [line("M1 3v9M23 3v9M2 7h20M5 5L2 7l3 2M19 5l3 2-3 2", "#33509a", 1.4), ["M1 15h22v8H1z", "#e6d59a", "#a8935a", 1], line("M4 15v4M8 15v5M12 15v4M16 15v5M20 15v4", "#8d7a44", 1)],

  gear: [ring(12, 12, 8, DARK, 2.4), line("M12 0v5M12 19v5M0 12h5M19 12h5", DARK, 3), line("M4 4l3 3M17 17l3 3M20 4l-3 3M7 17l-3 3", DARK, 2.4)],
  asmTree: [["M1 4l5-3 5 2v7l-5 3-5-3z", "#f3cf54", "#b08a1c", 1], ["M6 7l4-1v6l-4 2z", "#e3b83a"], line("M6 14v9M6 19h5M13 12h10", "#333c80", 1.4), ["M13 17l4-2 5 1v5l-4 2-5-1z", "#f3cf54", "#b08a1c", 1]],
  constraint: [["M2 1v10l8-5zM22 1v10l-8-5z", "#1f27a0"], line("M12 0v24", "#333", 1), ["M1 14h9v9H1z", "#f7e64d", "#a83a20", 1.2], ["M14 13l9 10h-9z", "#c2201d"]],
  partTree: [["M2 3c0-3 9-3 9 0v6c0 3-9 3-9 0z", "#c9749f", "#8a3f74", 1], line("M13 8h9M6 14v10M6 19h5", "#5f3a78", 1.5), ring(17, 19, 4.5, "#8a3f8a", 1.5), dot(17, 19, 1.6, "#8a3f8a")],
  books: [["M1 7l5-5h4v17l-4 4H1z", "#3d9dd8", "#2470a5", 0.8], ["M6 7l5-5h3v17l-4 4H6z", "#f1913d", "#b3611c", 0.8], ["M10 7l5-5h4v17l-4 4h-5z", "#44b651", "#2a7d35", 0.8], ["M16 7l5-5h2v17l-4 4h-3z", "#54b4e6", "#2470a5", 0.8]],
  info: [ring(8, 16, 7, "#1b6aa6", 1, "#2c86c6"), ["M7 10h3v2H7zM6 14h4v5h1v2H6v-2h1v-3H6z", "#fff"], line("M10 6c5 0 8 4 8 8M10 2c7 0 12 5 12 11", "#6d8fb4", 2)],
  webDoc: [["M4 1h11l6 6v16H4z", "#f3f9fd", "#5e8fb5", 1.4], ring(12, 15, 5, "#3f8c9d", 1.5, "#9dd0da"), ["M12 9l3 9H9z", "#3c9a4e"]],
  clock: [ring(12, 12, 10, "#77889a", 3, "#e6ebf0"), line("M12 4v8h6", "#222", 2)],
  spectrum: [["M2 1h8v5H2z", "#e2442f"], ["M2 6h8v5H2z", "#f4dc3c"], ["M2 11h8v5H2z", "#4bd34f"], ["M2 16h8v7H2z", "#2f6fe0"], line("M12 8l9 14", "#222", 3)],
  sim: [["M3 2c3-2 6-1 7 0v16l-7 1z", "#4d94cc", "#2b6fa8", 0.8], line("M10 6h12M10 12h9M1 18c6-5 10 3 13-2M1 22h9", "#3d86bd", 2), line("M13 9l8 13", "#222", 3)],
  robot: [line("M7 17l3-8 7-5 4 3M10 9l3 5", "#555", 3.4), line("M7 17l3-8 7-5 4 3", "#ddd", 1.4), ["M3 19c3-4 12-3 12 1l-3 3H5z", "#777c84"], dot(5, 20, 3, "#f09a2e")],
  catalog: [["M1 3l6-2v21l-6 2z", "#dcdcdc", "#777", 1.1], ["M8 3h15v17H8z", "#fff", "#555", 1.2], ["M11 6h9v8h-2l-2-3-2 3h-3z", "#d3473a"], ["M14 6h4v3h-4z", "#3f58b8"]],
  sheets: [["M1 1h22v22H1z", "#fff", "#3f5e9c", 1.4], ["M3 4h6v4H3zM15 4h6v4h-6z", "#7e8fd4"], line("M10 6h4M10 19h4", "#333", 1.4), ["M3 14h4l2 2v5H3zM15 14h6v7h-6z", "#e9f1e4", "#41598f", 1]],
  sheetTail: [["M3 3h20v9c-8 0-10 6-22 2l2-3z", "#eef3fb", "#6d8ba6", 1.4], ["M6 5h5v4H6zM15 5h5v4h-5z", "#7e8fd4"]],

  part: [["M2 4l8-3 4 2v9l6 2v6l-8 3-10-5z", "#2b62b8", "#1a438a", 1], ["M2 4l8-3 4 2-7 3z", "#7fa9e6"], ["M13 15l6-1-6 5z", "#7fa9e6"]],
  folder: [["M2 21V4h7l2 3h9v4", "#f0c557", "#9c7420", 1.2], ["M2 21l4-10h17l-4 10z", "#ffe08a", "#9c7420", 1.2]],
  viewCube: [["M3 6l8-5 9 4v12l-9 5-8-4z", "#dff4e6", "#2f9a5c", 1.8], line("M3 6l9 4 8-5M12 10v12M3 17l9-6 8 5", "#2f9a5c", 1.5), line("M15 21h8M20 18l3 3", "#d16a4a", 2)],
  camera: [["M1 6l17-5 5 15-17 7z", "#f4dcdc", "#b8312c", 2], ring(13, 12, 4, "#27306a", 2.4), line("M4 6l16 12", "#b8312c", 1.4)],
  tick: [["M1 12l5-3 4 5L20 2l3 2-12 19H9z", "#2fae3e"]],
  csys: [line("M5 2v18M5 4l14 15M5 18l16-8M5 20l10 3", "#333", 1.8), line("M9 8l9-3", "#3c8a52", 1.8)],
  body: [["M9 9h10l4 3v8l-5 3H9z", "#3f6fc8", "#27509a", 1.6], ["M9 13h9v5H9z", "#c7d8f4"], ring(8, 8, 6, "#a81d1a", 2.6, "#f2d6d4"), line("M4 12l8-8", "#a81d1a", 2.2), line("M14 2h7M17 2v8M10 8h8", "#222", 2)],
  meshSmall: [["M2 5h21c-3 5-2 11-5 17-6-4-11-4-15-3z", "#7b8fe0", "#4553a8", 1.4], line("M9 5v14M16 5l-2 15M2 11h18", "#fff", 1.4)],

  reverse: [line("M4 4l16 16", DARK, 2), line("M14 10l6-6M10 14l-6 6", "#141f6b", 1.4), ["M23 1v8l-8-8zM1 23v-8l8 8z", "#141f6b"]],
  chain: [line("M2 2v21", "#26306e", 2), line("M2 2l19 6M14 5c7 5 8 10 8 18", "#c8332e", 1.8), line("M12 4v19", "#222", 1.4), ring(17, 16, 4, "#26306e", 2), line("M21 11v11", "#26306e", 1.6), dot(3, 3, 1.6), dot(14, 6, 1.6)],
  origin: [line("M7 2l13 6M14 4c7 10-1 16-8 19", "#bcbcbc", 1.5), dot(10, 3, 2, "#a5a5a5"), dot(19, 7, 2, "#a5a5a5")],
  addSet: [ring(15, 15, 4.5, "#c8332e", 1.6), line("M15 7v16M7 15h16", "#7a2320", 1.8), line("M5 1v9M1 5h9", "#1754b8", 2.4)],
  del: [line("M3 3l18 19M21 3L3 21", "currentColor", 3.4)],
  up: [["M12 3l8 8h-4v9H8v-9H4z", "#69bfd6", "#1f5f78", 1.6]],
  upOff: [["M12 3l8 8h-4v9H8v-9H4z", "#a9b3b3"]],
  downOff: [["M12 21l8-8h-4V4H8v9H4z", "#a9b3b3"]],
  noise: [["M1 1h22v22H1z", "#e2e2e2", "#b5b5b5", 1], line("M4 8l4 8 4-10 3 12 4-13M5 18l12 1", "#999", 1.5)],
  screen: [line("M1 6V1h5M18 1h5v5M1 18v5h5M18 23h5v-5", "#8aa7b5", 1.6), ["M5 5h14v14H5z", "#fff", "#3d6c9a", 2], ["M9 9h7v6H9z", "#69a3cf"]],
};

function Glyph({ name, size = 24, box = "0 0 24 24" }) {
  const w = box.startsWith("8") ? 16 : size;
  return (
    <svg width={w} height={size} viewBox={box} aria-hidden="true">
      {(icons[name] || []).map(([d, fill = "none", stroke = "none", sw = 1], i) => (
        <path key={i} d={d} fill={fill} stroke={stroke} strokeWidth={sw} strokeLinejoin="round" />
      ))}
    </svg>
  );
}

/* ---------- window frame ---------- */
const Desktop = styled.div`
  position: relative;
  height: 100vh;
  padding: 0 58px;
  background: #000;
  overflow: hidden;
`;
const Window = styled.main`
  display: flex;
  flex-direction: column;
  height: 100%;
  padding-right: 3px;
  background: #fdfdfd;
  border-top: 2px solid #2f5358;
`;
const TitleBar = styled.header`
  display: flex;
  align-items: center;
  height: 35px;
  flex: none;
  padding-right: 2px;
`;
const NxLogo = styled.b`
  width: 44px;
  padding-left: 4px;
  margin-right: 5px;
  border-right: 1px solid #d4d4d4;
  color: #82929c;
  font: bold 24px/26px "Liberation Sans", sans-serif;
`;
const AppTitle = styled.h1`
  flex: 1;
  margin: 0;
  overflow: hidden;
  white-space: nowrap;
  font-size: 13px;
  font-weight: 400;
`;
const Siemens = styled.b`
  color: #0e8f86;
  font: 800 14px/20px "Open Sans", sans-serif;
  margin-right: 24px;
`;
const WinButton = styled.button`
  display: grid;
  place-items: center;
  width: ${(p) => (p.$small ? 19 : 25)}px;
  height: 24px;
  border: 0;
  background: none;
`;
const Split = styled.div`
  display: flex;
  flex: ${(p) => (p.$h ? `0 0 ${p.$h}px` : 1)};
  min-height: 0;
  background: ${(p) => p.$bg || "transparent"};
  border-bottom: ${(p) => (p.$line ? "2px solid #c8c8c8" : 0)};
`;
const LeftPart = styled.div`
  display: flex;
  flex: 0 0 197px;
  margin-right: 362px;
  overflow: hidden;
`;
const RightPart = styled.div`
  display: flex;
  flex: 1;
  min-width: 0;
  overflow: hidden;
`;
const MenuItem = styled.button`
  width: ${(p) => (p.$w ? p.$w + "px" : "auto")};
  height: 26px;
  flex: none;
  border: 0;
  background: none;
  font-size: 12px;
  text-align: left;
  white-space: nowrap;
`;

/* ---------- toolbars ---------- */
const ToolArea = styled.div`
  display: flex;
  flex-direction: column;
  height: 214px;
  flex: none;
`;
const Group = styled.div`
  display: flex;
  align-items: stretch;
  flex: ${(p) => (p.$grow ? 1 : "none")};
  padding: 0 ${(p) => p.$end || 0}px 0 ${(p) => p.$pad || 0}px;
  border-right: ${(p) => (p.$open ? 0 : "1px solid #dcdcdc")};
  border-bottom: ${(p) => (p.$flat ? 0 : "1px solid #dcdcdc")};
`;
const Tools = styled.div`
  display: flex;
  flex: none;
  align-items: center;
  justify-content: space-between;
  width: ${(p) => p.$w}px;
`;
const Tool = styled.button`
  display: grid;
  place-items: center;
  flex: none;
  height: 26px;
  border: 0;
  background: none;
  svg {
    display: block;
  }
  &:hover {
    background: #e3eff0;
  }
`;
const Grip = styled.i`
  width: 2px;
  height: 28px;
  margin-right: -2px;
  background: repeating-linear-gradient(#aaa 0 2px, transparent 2px 5px);
`;
const Bar = styled.i`
  width: 1px;
  height: 26px;
  margin-right: -2px;
  background: #d2d2d2;
`;
const Drop = styled.button`
  width: 4px;
  height: 16px;
  margin-top: ${(p) => (p.$low ? 14 : 0)}px;
  border: 0;
  background: none;
  display: flex;
  align-items: center;
  justify-content: center;
  &::before {
    content: "";
    flex: none;
    border: 4px solid transparent;
    border-top-color: #222;
    border-bottom: 0;
  }
`;
const ToolText = styled.span`
  font-size: 12px;
  white-space: nowrap;
  margin-left: -3px;
  color: ${(p) => (p.$off ? "#b5b5b5" : "#222")};
`;
const Badge = styled.button`
  width: 25px;
  height: 25px;
  border: 1px solid #8fbccb;
  border-radius: 5px;
  background: #e6e4d8;
  color: #d69a62;
  font-size: ${(p) => (p.$long ? 12 : 14)}px;
  line-height: 20px;
`;
const Swatch = styled.button`
  width: 25px;
  height: 25px;
  border: 1px solid #0001;
  background: ${(p) => p.$color};
`;
const More = styled.div`
  display: flex;
  flex-direction: column;
  align-items: center;
  width: 18px;
  margin-left: auto;
  font-weight: 700;
  line-height: 16px;
`;
const LetterA = styled.b`
  width: 24px;
  color: #444;
  font: bold 25px/26px "Liberation Serif", serif;
`;
const Power = styled.span`
  width: 24px;
  color: #555;
  font: 18px/24px "Open Sans", sans-serif;
  sup {
    font-size: 10px;
    line-height: 8px;
  }
  b {
    color: ${RED};
  }
`;
const Spacer = styled.span`
  width: 31px;
`;

function Items({ list, w, size = 24 }) {
  return (
    <Tools $w={w}>
      {list.split(" ").map((item, i) => {
        if (item === ":") return <Grip key={i} />;
        if (item === "|") return <Bar key={i} />;
        if (item === "v") return <Drop key={i} aria-label="更多" />;
        if (item === "_") return <Drop key={i} $low aria-label="工具条选项" />;
        if (item.startsWith("'")) return <ToolText key={i} $off={item !== "'启动"}>{item.slice(1)}</ToolText>;
        if (item.startsWith("#")) return <Swatch key={i} $color={item} aria-label={item} />;
        if (/^\d+$/.test(item)) return <Badge key={i} $long={item.length > 2}>{item}</Badge>;
        if (item === "text") return <Tool key={i} aria-label="文本"><LetterA>A</LetterA></Tool>;
        if (item === "power") return <Tool key={i} aria-label="规律"><Power>x<sup>z<b>3</b></sup></Power></Tool>;
        return (
          <Tool key={i} aria-label={item}>
            <Glyph name={item} size={size} box={item === "sheet" ? "8 0 16 24" : undefined} />
          </Tool>
        );
      })}
    </Tools>
  );
}
const MoreMarks = () => (
  <More>
    »
    <Drop aria-label="工具条选项" />
  </More>
);

const toolRows = [
  {
    left: { pad: 11, w: 200, list: ": launch '启动 v newDoc open save | undoCut" },
    right: [
      { pad: 1, w: 381, end: 6, list: ": cubeMove v cubeFace v cubeDelete cubeCopy v cubePattern v cubeDim v cubeGroup cubePairTri cubePaleMove v _" },
      { pad: 3, w: 408, end: 5, list: ": fitView v hinge v solidCube v wireCube rainbow clipPlane clipBlue v shade v | doorOut doorMark _" },
    ],
  },
  {
    left: { pad: 3, w: 190, list: ": plane v | extrude sweep revolve shellBox |" },
    right: [
      { pad: 11, w: 206, end: 6, list: "bend | edgeBlend sheetUp chamfer offsetCube ball _" },
      { pad: 3, w: 797, grow: true, more: true, list: ": sketchNew flag '完成草图 profile line arc circle fillet chamferLine rect spline plus offsetCurve v | trimA trimB trimC | dimGrey v | perp mirrorGrey triPerp v | refA refB" },
    ],
  },
  {
    left: { pad: 3, w: 195, list: ": brush ruled mesh nSided patch gridWarp" },
    right: [
      { pad: 15, w: 264, end: 5, list: "warpPair | bridge | offsetSrf v power warpTan netPink | flow _" },
      { pad: 4, w: 332, gap: true, more: true, list: ": tee dumbbell pot nuts zPipe pencilTip | calc iBeam orangeRing plateBall" },
      { pad: 4, w: 326, grow: true, more: true, list: ": #ee40e0 #ec4446 #eeaa4e #cfee70 #40a646 #42f2ec #3ea6e2 #3e3cda #8460c0 #a88262" },
    ],
  },
  {
    left: { pad: 3, w: 196, list: ": blockA blockB screw blockC netTan bell" },
    right: [
      { pad: 9, w: 200, end: 5, list: "boxUp boxPath camSq camRd press halfGrey _" },
      { pad: 4, w: 782, grow: true, more: true, list: ": 10 18 20 28 30 40 70 100 110 roofA stackA stackB stackC stackD stackE archA archB footA footB skew seven post omegaA omegaB" },
    ],
  },
  {
    left: { pad: 3, w: 201, list: ": spanIn crossPill hammer archTan | cornerTan roundBar" },
    right: [{ pad: 5, w: 206, end: 6, list: "wedgeA wedgeB bars | pillar dTube steps _" }],
  },
  {
    left: { pad: 3, w: 208, list: ": dots dotsMove | bracket yFrame gearTan | beam" },
    right: [{ pad: 19, w: 303, end: 6, list: "plateHoles | pill bolt plate2 angle table sShape float dial _" }],
  },
];

/* ---------- form parts ---------- */
const SelectWrap = styled.span`
  display: flex;
  align-items: center;
  align-self: center;
  flex: none;
  position: relative;
  width: ${(p) => p.$w}px;
  height: ${(p) => p.$h || 26}px;
  background: #fff;
  border: 1px solid #ababab;
  color: ${(p) => (p.$off ? "#aaa" : "#222")};
  select {
    appearance: none;
    width: 100%;
    height: 100%;
    padding-left: ${(p) => p.$inset || 4}px;
    border: 0;
    background: none;
    outline: 0;
  }
  &::after {
    content: "";
    position: absolute;
    right: 6px;
    pointer-events: none;
    border: 4px solid transparent;
    border-top: 5px solid currentColor;
    border-bottom: 0;
  }
`;
function Combo({ options, label, id, ...box }) {
  return (
    <SelectWrap {...box}>
      <select id={id} aria-label={label} disabled={box.$off}>
        {options.map((o) => (
          <option key={o}>{o}</option>
        ))}
      </select>
    </SelectWrap>
  );
}
const SelectionBar = styled.div`
  display: flex;
  height: 32px;
  flex: none;
  align-items: center;
  font-size: 12px;
`;
const LeftCombos = styled(LeftPart)`
  padding-left: 5px;
  gap: 8px;
`;

/* ---------- navigator ---------- */
const ResourceBar = styled.nav`
  display: flex;
  flex: 0 0 33px;
  flex-direction: column;
  background: #dadada;
`;
const ResourceTab = styled.button`
  display: grid;
  place-items: center;
  flex: none;
  width: 33px;
  height: ${(p) => p.$h || 44}px;
  margin-top: ${(p) => p.$gap || 0}px;
  border: 0;
  background: none;
  ${(p) =>
    p.$active &&
    css`
      background: #fff;
      border: solid #b5b5b5;
      border-width: 1px 0 1px 1px;
    `}
`;
const ScrollMark = styled.button`
  height: 16px;
  border: 0;
  background: none;
  color: ${(p) => (p.$off ? "#aaa" : "#222")};
  font-size: 7px;
  line-height: 12px;
`;
const Navigator = styled.section`
  display: flex;
  flex-direction: column;
  flex: 1;
  min-width: 0;
  padding-left: 7px;
  background: #fdfdfd;
`;
const NavTitle = styled.h2`
  margin: 0;
  height: 30px;
  padding: 7px 0 0 4px;
  font-size: 13px;
  font-weight: 400;
`;
const NavHead = styled.div`
  display: flex;
  align-items: center;
  gap: 18px;
  height: 23px;
  flex: none;
  padding-left: 7px;
  background: #ececec;
  border: solid #c8c8c8;
  border-width: 1px 0 1px 1px;
`;
const Tree = styled.ul`
  flex: 1;
  margin: 0;
  padding: 0;
  overflow: hidden;
  list-style: none;
  white-space: nowrap;
  border-left: 1px solid #c8c8c8;
  background: repeating-linear-gradient(#fdfdfd 0 20px, #e2e2e2 20px 21px, #f7f7f7 21px 41px, #e2e2e2 41px 42px);
`;
const TreeRow = styled.li`
  display: flex;
  align-items: center;
  height: 21px;
  padding-left: ${(p) => (p.$child ? 31 : 11)}px;
  color: ${(p) => (p.$off ? "#a8a8a8" : "#222")};
  font-weight: ${(p) => (p.$strong ? 700 : 400)};
  svg {
    flex: none;
    margin-right: 3px;
  }
  input + svg {
    margin-left: 1px;
  }
`;
const Guide = styled.i`
  position: relative;
  align-self: stretch;
  flex: none;
  width: ${(p) => p.$w}px;
  &::before {
    content: "";
    position: absolute;
    top: ${(p) => (p.$first ? "10px" : 0)};
    bottom: ${(p) => (p.$last ? "10px" : 0)};
    border-left: 1px dotted #aaa;
  }
  &::after {
    content: "";
    position: absolute;
    top: 10px;
    width: 9px;
    border-top: 1px dotted #aaa;
  }
`;
const Expander = styled.button`
  position: absolute;
  z-index: 1;
  left: -4px;
  top: 6px;
  width: 9px;
  height: 9px;
  border: 1px solid #ccc;
  background: #fff;
  font-size: 9px;
  line-height: 6px;
  font-style: normal;
`;
const Check = styled.input`
  appearance: none;
  flex: none;
  width: 13px;
  height: 13px;
  border: 1px solid #222;
  background: #fff;
  &:checked::before {
    content: "";
    display: block;
    height: 11px;
    background: #27a537;
    clip-path: polygon(4% 45%, 24% 36%, 42% 62%, 84% 4%, 98% 10%, 48% 98%, 34% 98%);
  }
`;
const NavScroll = styled.div`
  display: flex;
  align-items: center;
  flex: none;
  height: 18px;
  border-left: 1px solid #c8c8c8;
  background: #f0f0f0;
  button {
    width: 19px;
    border: 0;
    background: none;
    font-size: 18px;
    line-height: 12px;
  }
  i {
    flex: 1;
    height: 15px;
    background: #c9c9c9;
  }
`;
const NavDivider = styled.div`
  flex: none;
  height: 5px;
  border: solid #bbb;
  border-width: 1px 0;
  background: #e4e4e4;
`;
const NavFold = styled.button`
  flex: none;
  height: 25px;
  border: 0;
  border-bottom: 2px solid #cfcfcf;
  padding: 3px 0 0 6px;
  background: none;
  color: #2c7f92;
  font-size: 14px;
  text-align: left;
`;
const NavBottom = styled.div`
  height: 8px;
  flex: none;
`;
const bodies = ["1", "2", "4", "5", "20", "22", "24", "26", "32"];

function PartNavigator() {
  return (
    <Navigator>
      <NavTitle>部件导航器</NavTitle>
      <NavHead>
        名称
        <svg width="10" height="6" viewBox="0 0 10 6"><path d="M0 6 5 0l5 6z" fill="#222" /></svg>
      </NavHead>
      <Tree>
        <TreeRow><Guide $w={10} $first /><Glyph name="clock" size={16} />历史记录模式</TreeRow>
        <TreeRow><Guide $w={10}><Expander>+</Expander></Guide><Glyph name="viewCube" size={16} />模型视图</TreeRow>
        <TreeRow><Guide $w={10}><Expander>+</Expander></Guide><Glyph name="tick" size={14} /><Glyph name="camera" size={15} />摄像机</TreeRow>
        <TreeRow><Guide $w={10} $last><Expander>-</Expander></Guide><Glyph name="folder" size={16} />模型历史记录</TreeRow>
        <TreeRow $child>
          <Guide $w={12} />
          <Check type="checkbox" defaultChecked aria-label="基准坐标系" />
          <Glyph name="csys" size={17} />基准坐标系 (0)
        </TreeRow>
        {bodies.map((n) => (
          <TreeRow $child $off key={n}>
            <Guide $w={12} />
            <Check type="checkbox" defaultChecked aria-label={`体 (${n})`} />
            <Glyph name="body" size={17} />体 ({n})
          </TreeRow>
        ))}
        <TreeRow $child $strong>
          <Guide $w={12} $last />
          <Check type="checkbox" defaultChecked aria-label="通过曲线网格" />
          <Glyph name="meshSmall" size={17} />通过曲线网格
        </TreeRow>
      </Tree>
      <NavScroll><button aria-label="向左滚动">‹</button><i /></NavScroll>
      <NavDivider />
      <NavFold>相依性</NavFold>
      <NavFold>细节</NavFold>
      <NavFold>预览</NavFold>
      <NavBottom />
    </Navigator>
  );
}

/* ---------- graphics window ---------- */
const Viewport = styled.section`
  flex: 1;
  min-width: 0;
  background: linear-gradient(#b8bbbc, #d2d4d6 50%, #e6e8ea 88%, #e6e8ea);
  svg {
    display: block;
    width: 100%;
    height: 100%;
  }
  text {
    font: 14px "Liberation Sans", sans-serif;
  }
`;
function Model() {
  return (
    <svg viewBox="617 312 1050 703" role="img" aria-label="曲面模型">
      <defs>
        <linearGradient id="front" gradientUnits="userSpaceOnUse" x1="700" y1="645" x2="577" y2="1270">
          <stop offset="0" stopColor="#ffff14" />
          <stop offset=".04" stopColor="#e6e612" />
          <stop offset=".1" stopColor="#a3a30e" />
          <stop offset=".18" stopColor="#78780a" />
          <stop offset="1" stopColor="#5f5e04" />
        </linearGradient>
        <linearGradient id="tan" x1="0" x2="1">
          <stop offset="0" stopColor="#dcc48a" />
          <stop offset="1" stopColor="#9a8448" />
        </linearGradient>
      </defs>
      <g transform="translate(840 400) scale(.37 .3636)" fill="none" strokeWidth="4" strokeLinejoin="round">
        <path d="M1390 790C1398 745 1425 738 1455 762C1480 785 1492 808 1503 825z" fill="#66660a" />
        <path d="M93 541C97 515 105 503 130 503C350 515 700 560 900 612C1080 650 1260 695 1407 750L1390 790C1150 720 800 640 430 590L93 541z" fill="#fffe12" />
        <path d="M93 541L430 590C800 640 1150 720 1390 790C1375 880 1385 1000 1412 1182L1187 1170C1000 1152 700 1105 600 1080C500 1060 420 1030 328 1005L117 937C85 780 78 640 93 541z" fill="url(#front)" />
        <g stroke="#1fe524" strokeWidth="5">
          <path d="M130 503C105 500 97 518 93 541C78 640 85 780 117 937L328 1005M93 541L430 590C800 640 1150 720 1390 790L1503 825C1492 808 1480 785 1455 762C1425 738 1398 745 1390 790C1375 880 1385 1000 1412 1182L1187 1170" />
          <path d="M739 252C765 140 810 88 875 88C1000 88 1120 262 1187 335" stroke="#22e83c" />
          <path d="M437 1425C465 1310 510 1264 575 1264C690 1264 790 1415 881 1510" stroke="#22e83c" />
          <path d="M564 554C595 540 612 515 622 485M1170 600C1175 640 1188 670 1205 688M355 1018C420 1045 450 1110 453 1175M1140 1170C1080 1180 1020 1225 1000 1255" stroke="#35df5c" strokeWidth="4" />
        </g>
        <path d="M434 590C580 598 800 630 930 660C1060 685 1180 715 1294 753" stroke="#b3432a" strokeWidth="6" />
        <path d="M328 1005C420 1030 500 1060 600 1080C700 1105 1000 1152 1187 1170" stroke="#bd1fa6" strokeWidth="7" />
        <g stroke="#56a561" strokeWidth="4">
          <path d="M739 252C690 350 640 440 610 510C560 640 490 900 453 1165" />
          <path d="M896 92C820 380 700 740 640 1030" />
        </g>
        <g stroke="#d8d0a4" strokeWidth="3">
          <path d="M788 808L970 843L993 914L811 880L768 750M811 880L858 700M788 808L822 655M811 880L1105 935" />
          <path d="M858 700L1038 738L993 914M880 612L858 700L822 655" strokeWidth="2" />
        </g>
        <path d="M880 612L888 570" stroke="#1a1ab8" strokeWidth="3" />
        <path d="M880 575L901 530L901 578z" fill="#1414b4" />
        <path d="M760 740L776 755L770 768z" fill="#8a8a88" />
        <path d="M1130 935L1175 948L1130 952z" fill="#e9e9e2" />
        <path d="M1187 335C1186 450 1168 680 1140 790C1115 960 1060 1120 975 1320" stroke="#f49a58" strokeWidth="8" />
        <g fill="url(#tan)" stroke="#a08a50" strokeWidth="1">
          <path d="M432 1240h12l-6 185z" />
          <path d="M426 1242q10 8 21 0l-8-36z" />
          <circle cx="438" cy="1307" r="12" />
          <path d="M590 1268l34-195 14 2-40 193z" />
          <path d="M621 1070q10 10 20 2l-4-42z" />
          <circle cx="659" cy="945" r="12" />
          <path d="M881 1510l78-168 18 8z" />
          <path d="M960 1340q8 12 22 8l8-42z" />
        </g>
        <path d="M426 1242q10 6 21 0M960 1340q8 12 20 9" stroke="#3f3312" strokeWidth="4" />
        <g stroke="#e8d7a0" strokeWidth="3">
          <circle cx="514" cy="824" r="26" />
          <circle cx="1106" cy="937" r="25" />
        </g>
        <circle cx="514" cy="824" r="13" fill="#c8221c" />
        <circle cx="1106" cy="937" r="13" fill="#c8221c" />
        <circle cx="448" cy="1188" r="17" fill="#c4e4f5" stroke="#1588cf" strokeWidth="5" />
        <circle cx="448" cy="1188" r="8" stroke="#1588cf" strokeWidth="4" />
        <g stroke="#222" strokeWidth="11">
          <path d="M1084 1224C1060 1218 1042 1228 1040 1256M1050 1276C1075 1290 1098 1275 1098 1244" />
        </g>
        <g stroke="#fff" strokeWidth="6">
          <path d="M1082 1224C1060 1220 1042 1230 1040 1254M1052 1276C1075 1288 1098 1275 1098 1246" />
        </g>
        <path d="M1026 1250h26l-12 16zM1086 1250h26l-14-16z" fill="#fff" stroke="#222" />
        <path d="M1068 1239v24M1056 1251h24" stroke="#222" strokeWidth="9" />
        <path d="M1068 1242v18M1059 1251h18" stroke="#fff" strokeWidth="3" />
      </g>
      <text x="1170" y="592" fill="#4a4ac0">X</text>
      <text x="1117" y="674" fill="#b9b59a">Y</text>
      <text x="1277" y="752" fill="#b5b3a4">Z</text>
    </svg>
  );
}

/* ---------- dialog ---------- */
const Dialog = styled.section`
  position: absolute;
  left: 255px;
  top: 0;
  bottom: 0;
  display: flex;
  flex-direction: column;
  width: 362px;
  background: #e7e7e7;
`;
const DialogHead = styled.header`
  display: flex;
  align-items: center;
  height: 24px;
  flex: none;
  padding: 0 5px 0 8px;
  background: #5b8681;
  color: #f4f7f6;
  h2 {
    flex: 1;
    margin: 0 0 0 9px;
    font-size: 14px;
    font-weight: 400;
  }
  button {
    display: grid;
    place-items: center;
    width: 21px;
    height: 22px;
    border: 0;
    background: none;
  }
`;
const DialogBody = styled.div`
  display: flex;
  flex: 1;
  min-height: 0;
  padding: 2px 7px 0 6px;
`;
const Sections = styled.div`
  flex: 1;
  overflow: hidden;
  background: #fdfdfd;
`;
const Section = styled.section`
  padding: 0 10px ${(p) => (p.$folded ? 0 : 9)}px;
  border-bottom: 4px solid #d9d9d9;
`;
const Fold = styled.button`
  display: flex;
  align-items: center;
  justify-content: space-between;
  width: 100%;
  height: ${(p) => p.$h || 30}px;
  border: 0;
  background: none;
  color: #2c7f92;
  font-size: ${(p) => (p.$sub ? 13 : 14)}px;
`;
const Chevron = ({ down }) => (
  <svg width="10" height="10" viewBox="0 0 10 10">
    <path d={down ? "M1 1l4 7 4-7" : "M1 9l4-7 4 7"} fill="none" stroke="#2f8894" strokeWidth="2" />
  </svg>
);
const Line = styled.div`
  display: flex;
  align-items: center;
  justify-content: space-between;
  height: ${(p) => p.$h}px;
  margin-bottom: 2px;
  margin-top: ${(p) => p.$top || 0}px;
  color: ${(p) => (p.$off ? "#a6a6a6" : "#222")};
`;
const Pick = styled.div`
  display: flex;
  align-items: center;
  flex: 1;
  gap: 5px;
  height: 100%;
  margin-right: 2px;
  padding-left: 2px;
  background: ${(p) => (p.$active ? "#f8d47a" : "none")};
  b {
    width: 14px;
    padding-left: 4px;
    color: ${RED};
    font-size: 20px;
    line-height: 10px;
    padding-top: 6px;
  }
`;
const SquareButton = styled.button`
  display: grid;
  place-items: center;
  flex: none;
  width: ${(p) => p.$size || 25}px;
  height: ${(p) => p.$size || 25}px;
  margin-left: 2px;
  border: 1px solid ${(p) => (p.disabled ? "#cfcfcf" : "#a9a9a9")};
  background: ${(p) => p.$bg || "#fbfbfb"};
  color: #222;
  &:disabled {
    color: #999;
    svg {
      opacity: ${(p) => (p.$fade ? 0.35 : 1)};
    }
  }
`;
const SubBox = styled.div`
  padding: 0 8px 7px;
  border: 1px solid #d5dcdc;
  background: #eef4f4;
`;
const ListRow = styled.div`
  display: flex;
  align-items: flex-start;
  gap: 1px;
  margin-top: 7px;
`;
const ListFrame = styled.div`
  flex: 1;
  height: 88px;
  padding: 1px 2px;
  border: 1px solid #ccd2d2;
  background: #fff;
`;
const CurveTable = styled.table`
  width: 100%;
  border-collapse: collapse;
  td {
    height: 21px;
    padding: 0 3px;
    border-bottom: 1px solid #e8e8e8;
    line-height: 18px;
    white-space: nowrap;
  }
  td:first-child {
    width: 56px;
    border-right: ${(p) => (p.$empty ? 0 : "1px solid #e0e0e0")};
  }
`;
const CurveRow = styled.tr`
  background: ${(p) => (p.$on ? "#3295ea" : "#fdfdfd")};
  color: ${(p) => (p.$on ? "#d9efff" : "#222")};
`;
const ButtonStack = styled.div`
  display: flex;
  flex-direction: column;
  gap: 2px;
`;
const CheckLabel = styled.label`
  display: flex;
  align-items: center;
  gap: 6px;
`;
const Tabs = styled.div`
  display: flex;
  align-items: flex-end;
  height: 31px;
  position: relative;
`;
const Tab = styled.button`
  width: ${(p) => (p.$on ? 59 : 66)}px;
  height: ${(p) => (p.$on ? 32 : 30)}px;
  margin-bottom: ${(p) => (p.$on ? -1 : 0)}px;
  border: 1px solid #c4c4c4;
  border-bottom: 0;
  border-left-width: ${(p) => (p.$on ? 1 : 0)}px;
  background: ${(p) => (p.$on ? "#fdfdfd" : "#e6e6e6")};
  color: ${(p) => (p.$on ? "#2c7f92" : "#222")};
`;
const TabPanel = styled.div`
  display: flex;
  align-items: center;
  justify-content: space-between;
  height: 38px;
  margin-bottom: 3px;
  padding: 0 7px 0 6px;
  border: 1px solid #c4c4c4;
`;
const NumberField = styled.input`
  width: 86px;
  height: 24px;
  padding-left: 22px;
  border: 1px solid #ababab;
  background: #fff;
  font: 16px/20px "Liberation Mono", monospace;
`;
const Scrollbar = styled.div`
  display: flex;
  flex-direction: column;
  width: 16px;
  background: #f0f0f0;
  i {
    height: 841px;
    background: #cacaca;
  }
  button {
    display: grid;
    place-items: center;
    flex: none;
    height: 20px;
    border: 0;
    background: none;
  }
  button:last-child {
    margin-top: auto;
  }
`;
const DialogFoot = styled.footer`
  height: 51px;
  flex: none;
  border-top: 1px solid #ddd;
`;
const Collapse = styled.button`
  display: grid;
  place-items: center;
  width: 100%;
  height: 14px;
  border: 0;
  border-bottom: 1px solid #d2d2d2;
  background: none;
`;
const Actions = styled.div`
  display: flex;
  justify-content: flex-end;
  gap: 5px;
  padding: 7px 16px 0 0;
  button {
    width: 57px;
    height: 27px;
    border: 1px solid #c2c2c2;
    background: #e0e0e0;
    &:disabled {
      color: #b2b2b2;
    }
    &:last-child {
      background: #cbd0d6;
    }
  }
`;

function CurveSection({ title, count, rows, active, selected }) {
  return (
    <Section>
      <Fold>{title}<Chevron /></Fold>
      <Line $h={33} $top={3}>
        <Pick $active={active}>
          {active ? <Glyph name="tick" size={14} /> : <b>*</b>}
          选择曲线 ({count})
        </Pick>
        <SquareButton aria-label="反向" disabled={!active} $fade $bg="#fff"><Glyph name="reverse" size={17} /></SquareButton>
        <SquareButton aria-label="曲线规则" $size={33} $bg={active ? "#f9e2ac" : "#fff"}><Glyph name="chain" size={25} /></SquareButton>
      </Line>
      <Line $h={34} $off>
        指定原始曲线
        <SquareButton aria-label="原始曲线" $size={33} disabled><Glyph name="origin" /></SquareButton>
      </Line>
      <Line $h={25}>
        添加新集
        <SquareButton aria-label="添加新集" $bg={active ? "#93c8dc" : "#fff"}><Glyph name="addSet" size={17} /></SquareButton>
      </Line>
      <SubBox>
        <Fold $sub $h={24}>列表<Chevron /></Fold>
        <ListRow>
          <ListFrame>
            <CurveTable $empty={!active}>
              <tbody>
                {rows.map((r, i) => (
                  <CurveRow key={i} $on={selected === i}>
                    <td>{r}</td>
                    <td />
                  </CurveRow>
                ))}
              </tbody>
            </CurveTable>
          </ListFrame>
          <ButtonStack>
            <SquareButton aria-label="移除" disabled={!active}><Glyph name="del" size={15} /></SquareButton>
            <SquareButton aria-label="上移" disabled={!active}><Glyph name={active ? "up" : "upOff"} size={13} /></SquareButton>
            <SquareButton aria-label="下移" disabled><Glyph name="downOff" size={13} /></SquareButton>
          </ButtonStack>
        </ListRow>
      </SubBox>
    </Section>
  );
}

const strings = ["第一主线串", "最后主线串", "第一交叉线串", "最后交叉线串"];
const tolerances = [
  ["交点", "0.02540"],
  ["G0（位置）", "0.00100"],
  ["G1（相切）", "0.50000"],
];

function MeshDialog() {
  const [tab, setTab] = useState("主线串");
  return (
    <Dialog role="dialog" aria-label="通过曲线网格">
      <DialogHead>
        <svg width="16" height="16" viewBox="0 0 16 16" fill="none" stroke="#fff">
          <circle cx="8" cy="8" r="4" strokeWidth="2" />
          <circle cx="8" cy="8" r="6" strokeWidth="2" strokeDasharray="3 1.7" />
        </svg>
        <h2>通过曲线网格</h2>
        <button aria-label="重置">
          <svg width="14" height="14" viewBox="0 0 14 14" fill="none" stroke="#fff" strokeWidth="2">
            <path d="M8 2a5 5 0 1 1-6 5M2 3h4v4" />
          </svg>
        </button>
        <button aria-label="关闭">
          <svg width="13" height="13" viewBox="0 0 13 13" stroke="#fff" strokeWidth="2"><path d="M1 1l11 11M12 1L1 12" /></svg>
        </button>
      </DialogHead>
      <DialogBody>
        <Sections>
          <CurveSection title="主曲线" count={3} active selected={2} rows={["主曲线 1", "主曲线 2", "主曲线 3", ""]} />
          <CurveSection title="交叉曲线" count={0} rows={["", "", "", ""]} />
          <Section>
            <Fold>连续性<Chevron /></Fold>
            <Line $h={22} $top={3}>
              <CheckLabel><Check type="checkbox" />全部应用</CheckLabel>
            </Line>
            {strings.map((s, i) => (
              <Line $h={26} key={s}>
                <label htmlFor={`cont${i}`}>{s}</label>
                <Combo id={`cont${i}`} options={["G0（位置）", "G1（相切）", "G2（曲率）"]} $w={148} />
              </Line>
            ))}
          </Section>
          <Section $folded><Fold $h={24}>脊线<Chevron down /></Fold></Section>
          <Section $folded><Fold $h={24}>输出曲面选项<Chevron down /></Fold></Section>
          <Section>
            <Fold $h={28}>设置<Chevron /></Fold>
            <Line $h={26} $top={3}>
              <label htmlFor="bodyType">体类型</label>
              <Combo id="bodyType" options={["实体", "片体"]} $w={148} />
            </Line>
            <Tabs role="tablist">
              {["主线串", "交叉线串"].map((t) => (
                <Tab key={t} role="tab" $on={tab === t} onClick={() => setTab(t)}>{t}</Tab>
              ))}
            </Tabs>
            <TabPanel>
              <label htmlFor="rebuild">重新构建</label>
              <Combo id="rebuild" options={["无", "次数和公差", "自动拟合"]} $w={148} />
            </TabPanel>
            <SubBox>
              <Fold $sub $h={24}>公差<Chevron /></Fold>
              {tolerances.map(([name, value], i) => (
                <Line $h={24} $top={i ? 1 : 6} key={name}>
                  <label htmlFor={`tol${i}`}>{name}</label>
                  <NumberField id={`tol${i}`} defaultValue={value} />
                </Line>
              ))}
            </SubBox>
          </Section>
        </Sections>
        <Scrollbar>
          <button aria-label="向上滚动"><svg width="9" height="8" viewBox="0 0 9 8"><path d="M1 7l3.500-5 3.500 5" fill="none" stroke="#444" strokeWidth="2" /></svg></button>
          <i />
          <button aria-label="向下滚动"><svg width="9" height="8" viewBox="0 0 9 8"><path d="M1 1l3.500 5L8 1" fill="none" stroke="#444" strokeWidth="2" /></svg></button>
        </Scrollbar>
      </DialogBody>
      <DialogFoot>
        <Collapse aria-label="收起"><svg width="10" height="6" viewBox="0 0 10 6"><path d="M0 6 5 0l5 6z" fill="#111" /></svg></Collapse>
        <Actions>
          <button disabled>确定</button>
          <button disabled>应用</button>
          <button>取消</button>
        </Actions>
      </DialogFoot>
    </Dialog>
  );
}

/* ---------- page ---------- */
const StatusText = styled.p`
  margin: 0;
  padding: 3px 0 0 3px;
  font-size: 12px;
  font-weight: 500;
  white-space: nowrap;
`;
const StatusIcons = styled.div`
  display: flex;
  gap: 6px;
  align-items: center;
  margin-left: auto;
  padding-right: 57px;
`;
const Taskbar = styled.div`
  height: 6px;
  flex: none;
  background: #5b8681;
`;
const MenuRight = styled.div`
  display: flex;
  margin-left: auto;
  align-items: center;
  padding-right: 5px;
`;
const MenuGrip = styled(Grip)`
  height: 20px;
  align-self: center;
  margin: 0 4px 0 3px;
`;
const Corner = styled.div`
  display: flex;
  align-items: center;
  margin-left: auto;
  padding: 10px 7px 0 0;
`;
const AppMark = styled.div`
  display: flex;
  align-items: center;
  margin-right: 7px;
`;
const MenuStart = styled.span`
  width: 6px;
`;

export default function App() {
  return (
    <Desktop>
      <GlobalStyle />
      <Window>
        <TitleBar>
          <NxLogo>NX</NxLogo>
          <AppTitle>NX 10 - 建模 - [UG100个</AppTitle>
          <Siemens>SIEMENS</Siemens>
          <WinButton aria-label="最小化"><svg width="10" height="12"><path d="M1 10h8" stroke="#444" strokeWidth="2" /></svg></WinButton>
          <WinButton aria-label="最大化"><svg width="12" height="12"><path d="M1 1h10v10H1zM1 2h10" fill="none" stroke="#444" strokeWidth="1" /></svg></WinButton>
          <WinButton aria-label="关闭"><svg width="12" height="12"><path d="M1 1l10 10M11 1L1 11" stroke="#444" strokeWidth="2" /></svg></WinButton>
        </TitleBar>
        <Split $h={29} $bg="#c4d6d5">
          <LeftPart>
            <MenuGrip />
            <AppMark><Glyph name="part" size={15} /></AppMark>
            <MenuItem $w={52}>文件(<u>F</u>)</MenuItem>
            <MenuItem $w={52}>编辑(<u>E</u>)</MenuItem>
            <MenuItem $w={52}>视图(<u>V</u>)</MenuItem>
            <MenuItem aria-label="插入">插</MenuItem>
          </LeftPart>
          <RightPart>
            <MenuStart />
            <MenuItem $w={55}>窗口(<u>O</u>)</MenuItem>
            <MenuItem $w={64}>GC工具箱</MenuItem>
            <MenuItem $w={99}>燕秀UG模具9.12</MenuItem>
            <MenuItem>帮助(<u>H</u>)</MenuItem>
            <MenuRight>
              <WinButton $small aria-label="最小化子窗口"><svg width="9" height="12"><path d="M1 10h8" stroke="#222" strokeWidth="2" /></svg></WinButton>
              <WinButton $small aria-label="还原子窗口"><svg width="13" height="12"><path d="M4 4V1h8v6H9M1 5h8v6H1zM1 6h8M4 2h8" fill="none" stroke="#222" /></svg></WinButton>
              <WinButton $small aria-label="关闭子窗口"><svg width="10" height="10"><path d="M1 1l8 8M9 1L1 9" stroke="#222" strokeWidth="2" /></svg></WinButton>
            </MenuRight>
          </RightPart>
        </Split>
        <ToolArea>
          {toolRows.map((row, i) => (
            <Split key={i}>
              <LeftPart>
                <Group $pad={row.left.pad} $open><Items {...row.left} /></Group>
              </LeftPart>
              <RightPart>
                {row.right.map((g, j) => (
                  <Group key={j} $pad={g.pad} $end={g.gap ? 0 : g.end} $grow={g.grow}>
                    <Items {...g} />
                    {g.gap && <Spacer />}
                    {g.more && <MoreMarks />}
                  </Group>
                ))}
              </RightPart>
            </Split>
          ))}
        </ToolArea>
        <SelectionBar>
          <LeftCombos>
            <Combo options={["没有选择过滤器"]} label="选择过滤器" $w={140} $h={21} $inset={2} />
            <Combo options={["仅在工作部件内"]} label="选择范围" $w={140} $h={21} $inset={2} />
          </LeftCombos>
          <RightPart>
            <Combo options={["切曲线"]} label="曲线规则" $w={133} $h={21} $inset={1} $off />
            <Group $pad={7} $end={5} $flat><Items list="sTie sTie2 sTree sFilter sArrow" w={116} size={18} /></Group>
            <Group $pad={6} $end={6} $flat><Items list="sSnap sEnd sMid sCtrl sInter sCenter sQuad sPlus sOn sFace" w={234} size={18} /></Group>
            <Group $pad={7} $open $flat><Combo options={["内侧"]} label="侧" $w={117} $h={21} $inset={3} /></Group>
            <Corner><Drop aria-label="工具条选项" /></Corner>
          </RightPart>
        </SelectionBar>
        <Split>
          <LeftPart>
            <ResourceBar>
              <ResourceTab $h={28} aria-label="设置"><Glyph name="gear" size={14} /></ResourceTab>
              <ResourceTab $gap={16} aria-label="装配导航器"><Glyph name="asmTree" /></ResourceTab>
              <ResourceTab aria-label="约束导航器"><Glyph name="constraint" /></ResourceTab>
              <ResourceTab $active aria-label="部件导航器"><Glyph name="partTree" /></ResourceTab>
              <ResourceTab aria-label="重用库"><Glyph name="books" /></ResourceTab>
              <ResourceTab $gap={8} $h={56} aria-label="HD3D 工具"><Glyph name="info" size={26} /></ResourceTab>
              <ResourceTab $h={56} aria-label="网页浏览器"><Glyph name="webDoc" /></ResourceTab>
              <ResourceTab $gap={6} aria-label="历史记录"><Glyph name="clock" /></ResourceTab>
              <ResourceTab aria-label="系统材料"><Glyph name="spectrum" /></ResourceTab>
              <ResourceTab aria-label="加工向导"><Glyph name="sim" /></ResourceTab>
              <ResourceTab aria-label="机床"><Glyph name="robot" /></ResourceTab>
              <ResourceTab aria-label="模板"><Glyph name="catalog" /></ResourceTab>
              <ResourceTab aria-label="图纸模板"><Glyph name="sheets" /></ResourceTab>
              <ResourceTab $h={25} aria-label="角色"><Glyph name="sheetTail" /></ResourceTab>
              <ScrollMark $off>▲</ScrollMark>
              <ScrollMark $off>▲</ScrollMark>
              <ScrollMark>▼</ScrollMark>
              <ScrollMark>▼</ScrollMark>
            </ResourceBar>
            <PartNavigator />
          </LeftPart>
          <Viewport><Model /></Viewport>
        </Split>
        <Split $h={36} $line>
          <LeftPart>
            <Group $pad={3} $open $flat><Items list=": line arc rect spline text offsetRed" w={195} /></Group>
          </LeftPart>
          <RightPart>
            <Group $end={6} $flat><Items list="sheet curveCut crossCut sCut corner chamferBox curveUp project _" w={254} /></Group>
            <Group $pad={4} $end={5} $flat><Items list=": csysMove v | gemHand palette | gemTri v gemPairA gemPairB | dimDiag v ruler _" w={330} /></Group>
          </RightPart>
        </Split>
        <Split $h={23}>
          <LeftPart><StatusText>拖动光标以绕 X-Y 旋转视图</StatusText></LeftPart>
          <RightPart>
            <StatusIcons><Glyph name="noise" size={16} /><Glyph name="screen" size={16} /></StatusIcons>
          </RightPart>
        </Split>
        <Taskbar />
      </Window>
      <MeshDialog />
    </Desktop>
  );
}
